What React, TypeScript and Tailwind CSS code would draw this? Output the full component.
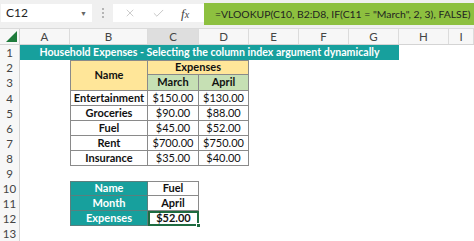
import { X, Check } from "lucide-react";
import clsx from "clsx";

const font = "font-['Lato','Open_Sans',sans-serif]";

const rowStart = [
  "row-start-1",
  "row-start-2",
  "row-start-3",
  "row-start-4",
  "row-start-5",
  "row-start-6",
  "row-start-7",
  "row-start-8",
  "row-start-9",
  "row-start-10",
  "row-start-11",
  "row-start-12",
  "row-start-13",
];

const columns = ["A", "B", "C", "D", "E", "F", "G", "H", "I"];
const colWidths = [
  "w-[50px]",
  "w-[78px]",
  "w-[51px]",
  "w-[50px]",
  "w-[50px]",
  "w-[50px]",
  "w-[50px]",
  "w-[50px]",
  "w-[25px]",
];

const expenses = [
  { name: "Entertainment", march: "$150.00", april: "$130.00" },
  { name: "Groceries", march: "$90.00", april: "$88.00" },
  { name: "Fuel", march: "$45.00", april: "$52.00" },
  { name: "Rent", march: "$700.00", april: "$750.00" },
  { name: "Insurance", march: "$35.00", april: "$40.00" },
];

const lookup = [
  { label: "Name", value: "Fuel" },
  { label: "Month", value: "April" },
  { label: "Expenses", value: "$52.00" },
];

const FormulaBar = () => (
  <div className="flex items-start h-[29px] bg-[#f0f0f0] border-b border-[#dadada]">
    <div className="shrink-0 ml-px mt-1 w-[91px] h-[18px] bg-white flex items-center justify-between pl-[5px] pr-[5px]">
      <span className="text-[12px] text-[#222] leading-none">C12</span>
      <span className="text-[7px] text-[#666] leading-none">▼</span>
    </div>
    <div className="shrink-0 w-[21px] h-[26px] flex flex-col items-center justify-center gap-[2px]">
      <span className="w-[2px] h-[2px] bg-[#b5b5b5]" />
      <span className="w-[2px] h-[2px] bg-[#b5b5b5]" />
      <span className="w-[2px] h-[2px] bg-[#b5b5b5]" />
    </div>
    <div className="shrink-0 mt-1 w-[91px] h-[18px] bg-white flex items-center">
      <X size={12} strokeWidth={1.2} className="ml-[11px] text-[#a9a9a9]" />
      <Check size={13} strokeWidth={1.2} className="ml-[16px] text-[#a9a9a9]" />
      <span className="ml-[16px] text-[13px] italic text-[#444] font-['Liberation_Serif',serif] leading-none">
        f<span className="text-[10px]">x</span>
      </span>
    </div>
    <div className="mt-[3px] flex-1 min-w-0 h-[22px] bg-[#8dc03f] flex items-center pl-[11px]">
      <span className="text-[10.4px] text-[#1f1f1f] whitespace-nowrap leading-none">
        =VLOOKUP(C10, B2:D8, IF(C11 = "March", 2, 3), FALSE)
      </span>
    </div>
  </div>
);

const ColumnHeaders = () => (
  <div className="flex h-4 bg-[#f7f7f7] border-b border-[#d4d4d4]">
    <div className="relative shrink-0 w-5 border-r border-[#d4d4d4]">
      <div className="absolute right-[2px] bottom-[2px] w-0 h-0 border-l-[11px] border-l-transparent border-b-[11px] border-b-[#1e7b3c]" />
    </div>
    {columns.map((c, i) => (
      <div
        key={c}
        className={clsx(
          colWidths[i],
          "shrink-0 flex items-center justify-center text-[11.5px] text-[#444] border-r border-[#dcdcdc]",
          c === "C" && "bg-[#dedede] text-[#2c2c2c]"
        )}
      >
        {c}
      </div>
    ))}
  </div>
);

const edge = "border-[#8a8a8a]";
const cellText = "text-[11px]";

const App = () => {
  return (
    <div className={clsx("w-[474px] h-[241px] bg-white overflow-hidden text-[#111]", font)}>
      <FormulaBar />
      <ColumnHeaders />
      <div className="grid grid-cols-[20px_50px_78px_51px_50px_50px_50px_50px_50px_25px] grid-rows-[15px_15px_16px_repeat(10,15px)]">
        {rowStart.map((r, i) => (
          <div
            key={r}
            className={clsx(
              r,
              "col-start-1 flex items-center justify-center text-[11.5px] text-[#444] bg-[#f7f7f7] border-r border-[#d4d4d4]",
              i === 11 && "bg-[#dcdcdc] text-[#2c2c2c]"
            )}
          >
            {i + 1}
          </div>
        ))}

        {/* title band */}
        <div className="row-start-1 col-start-2 col-span-7 bg-[#17a09d] text-white font-bold text-[10.6px] flex items-center justify-center whitespace-nowrap">
          Household Expenses - Selecting the column index argument dynamically
        </div>

        {/* expenses table header */}
        <div className={clsx("row-start-2 row-span-2 col-start-3 bg-[#ffe699] border font-bold flex items-center justify-center", cellText, edge)}>
          Name
        </div>
        <div className={clsx("row-start-2 col-start-4 col-span-2 bg-[#ffe699] border-t border-r border-b font-bold flex items-center justify-center", cellText, edge)}>
          Expenses
        </div>
        <div className={clsx("row-start-3 col-start-4 bg-[#c6e0b4] border-r border-b font-bold flex items-center justify-center", cellText, edge)}>
          March
        </div>
        <div className={clsx("row-start-3 col-start-5 bg-[#c6e0b4] border-r border-b font-bold flex items-center justify-center", cellText, edge)}>
          April
        </div>

        {expenses.map((e, i) => (
          <div key={e.name} className="contents">
            <div className={clsx(rowStart[i + 3], "col-start-3 border-l border-r border-b font-bold flex items-center justify-center whitespace-nowrap", cellText, edge)}>
              {e.name}
            </div>
            <div className={clsx(rowStart[i + 3], "col-start-4 border-r border-b flex items-center justify-center", cellText, edge)}>
              {e.march}
            </div>
            <div className={clsx(rowStart[i + 3], "col-start-5 border-r border-b flex items-center justify-center", cellText, edge)}>
              {e.april}
            </div>
          </div>
        ))}

        {/* lookup inputs */}
        {lookup.map((l, i) => (
          <div key={l.label} className="contents">
            <div
              className={clsx(
                rowStart[i + 9],
                "col-start-3 bg-[#17a09d] text-white font-bold flex items-center justify-center border-l border-r border-b border-[#5a7f7e]",
                cellText,
                i === 0 && "border-t"
              )}
            >
              {l.label}
            </div>
            <div
              className={clsx(
                rowStart[i + 9],
                "col-start-4 relative font-bold flex items-center justify-center",
                cellText,
                i === 2 ? "border-2 border-[#1e6b41]" : clsx("border-r border-b", edge, i === 0 && "border-t")
              )}
            >
              {l.value}
              {i === 2 && (
                <span className="absolute -right-[4px] -bottom-[4px] w-[5px] h-[5px] bg-[#1e6b41] border border-white" />
              )}
            </div>
          </div>
        ))}
      </div>
    </div>
  );
};

export default App;
